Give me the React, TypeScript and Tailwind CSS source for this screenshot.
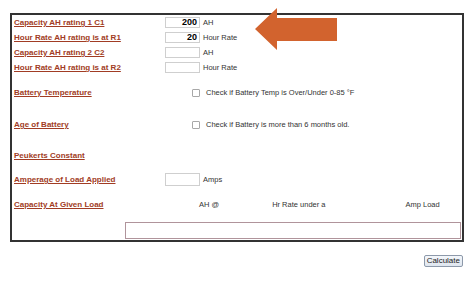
import React from "react";

const labelCls =
  "w-[151px] shrink-0 text-[8px] leading-[11px] font-bold underline text-[#a13c24] [font-family:'Liberation_Sans',Arial,sans-serif]";
const unitCls = "text-[7.5px] leading-[11px] text-[#333] [font-family:'Liberation_Sans',Arial,sans-serif]";

function NumRow({ label, value, unit, mt }: { label: string; value?: string; unit: string; mt: string }) {
  return (
    <div className={`flex items-start h-[11px] ${mt}`}>
      <div className={labelCls}>{label}</div>
      <div className="w-[35px] h-[11px] border border-[#cfcfcf] bg-white flex items-center justify-end pr-[2px] text-[9px] font-bold text-black [font-family:'Liberation_Sans',Arial,sans-serif] leading-none">
        {value}
      </div>
      <div className={`ml-[3px] ${unitCls}`}>{unit}</div>
    </div>
  );
}

function CheckRow({ label, text, mt }: { label: string; text: string; mt: string }) {
  return (
    <div className={`flex items-center h-[11px] ${mt}`}>
      <div className={labelCls}>{label}</div>
      <div className="ml-[27px] w-[8px] h-[8px] border border-[#a8a8a8] rounded-[1px] bg-white" />
      <div className={`ml-[6px] ${unitCls}`}>{text}</div>
    </div>
  );
}

export default function App() {
  return (
    <div className="relative w-[474px] h-[281px] bg-white overflow-hidden">
      <div className="pt-[13px] pl-[10px]">
        <div className="w-[454px] h-[229px] border-2 border-[#333] flex flex-col pl-[2px] pt-[2px]">
          <NumRow label="Capacity AH rating 1 C1" value="200" unit="AH" mt="mt-0" />
          <NumRow label="Hour Rate AH rating is at R1" value="20" unit="Hour Rate" mt="mt-[4px]" />
          <NumRow label="Capacity AH rating 2 C2" unit="AH" mt="mt-[4px]" />
          <NumRow label="Hour Rate AH rating is at R2" unit="Hour Rate" mt="mt-[4px]" />
          <CheckRow label="Battery Temperature" text="Check if Battery Temp is Over/Under 0-85 °F" mt="mt-[14px]" />
          <CheckRow label="Age of Battery" text="Check if Battery is more than 6 months old." mt="mt-[21px]" />
          <div className={`flex items-start h-[11px] mt-[20px]`}>
            <div className={labelCls}>Peukerts Constant</div>
          </div>
          <div className="flex items-center h-[13px] mt-[12px]">
            <div className={labelCls}>Amperage of Load Applied</div>
            <div className="w-[35px] h-[13px] border border-[#cfcfcf] bg-white" />
            <div className={`ml-[3px] ${unitCls}`}>Amps</div>
          </div>
          <div className="flex items-start h-[11px] mt-[13px]">
            <div className={labelCls}>Capacity At Given Load</div>
            <div className={`ml-[34px] ${unitCls}`}>AH @</div>
            <div className={`ml-[53px] ${unitCls}`}>Hr Rate under a</div>
            <div className={`ml-[80px] ${unitCls}`}>Amp Load</div>
          </div>
          <div className="ml-[111px] mt-[12px] w-[336px] h-[17px] border border-[#b0949b] bg-white" />
        </div>
        <div className="flex justify-end w-[454px] mt-[13px]">
          <button className="h-[12px] px-[2px] border border-[#8d99aa] rounded-[2px] bg-gradient-to-b from-[#f4f7fb] to-[#dfe6ef] text-[8px] leading-none text-[#222] [font-family:'Liberation_Sans',Arial,sans-serif] mr-[1px]">
            Calculate
          </button>
        </div>
      </div>
      <svg className="absolute left-0 top-0" width="474" height="60" viewBox="0 0 474 60">
        <polygon points="255,29 277,8 277,18 337,18 337,41 277,41 277,50" fill="#d2632e" />
      </svg>
    </div>
  );
}
